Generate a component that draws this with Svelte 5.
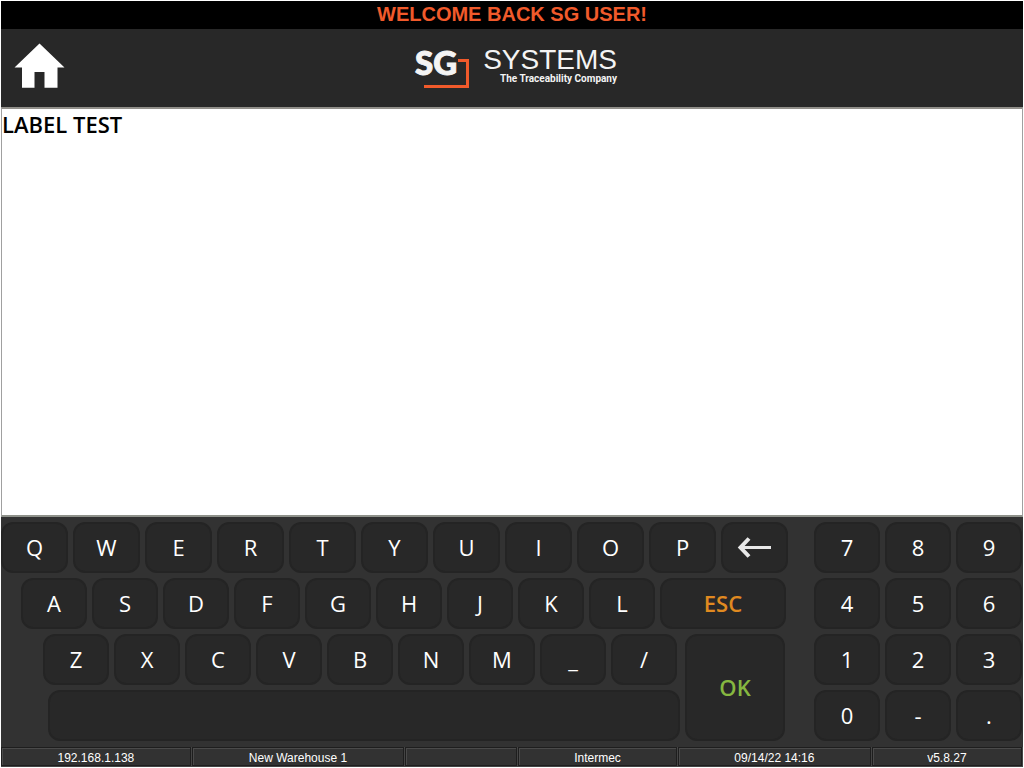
<script>
  let text = $state('LABEL TEST');

  const top = [...'QWERTYUIOP'];
  const home = [...'ASDFGHJKL'];
  const bottom = [...'ZXCVBNM_/'];
  const numbers = [...'7894561230-.'];
  const status = [
    { text: '192.168.1.138', share: 190 },
    { text: 'New Warehouse 1', share: 213 },
    { text: '', share: 111 },
    { text: 'Intermec', share: 159 },
    { text: '09/14/22 14:16', share: 193 },
    { text: 'v5.8.27', share: 150 }
  ];

  const type = (c) => (text += c);
  const erase = () => (text = text.slice(0, -1));
  const clear = () => (text = '');
</script>

{#snippet key(c)}
  <button class="key" onclick={() => type(c)}>{c}</button>
{/snippet}

<div class="screen">
  <div class="banner">WELCOME BACK SG USER!</div>

  <header>
    <button class="home" aria-label="Home">
      <svg width="52" height="50" viewBox="0 0 52 50">
        <path d="M26.500 0.500 51.500 24.500H44.500V44.700H31.500V29H21.500V44.700H9V24.500H1.500Z" fill="#fff" />
      </svg>
    </button>
    <svg class="logo" width="214" height="54" viewBox="0 0 214 54">
      <text class="sg" x="10" y="34">SG</text>
      <path d="M53 19.500H62.500V45.500H19" fill="none" stroke="#f15a2b" stroke-width="3" />
      <text class="systems" x="212" y="28" text-anchor="end">SYSTEMS</text>
      <text class="tag" x="212" y="41" text-anchor="end">The Traceability Company</text>
    </svg>
  </header>

  <textarea aria-label="Label text" spellcheck="false" bind:value={text}></textarea>

  <main>
    <div class="letters">
      <div class="row first">
        {#each top as c}{@render key(c)}{/each}
        <button class="key" aria-label="Backspace" onclick={erase}>
          <svg width="36" height="22" viewBox="0 0 36 22">
            <path d="M34 11.500H4" fill="none" stroke="#e8e8e8" stroke-width="3" />
            <path d="M12 2.500 3.500 11.500 12 20.500" fill="none" stroke="#e8e8e8" stroke-width="4" />
          </svg>
        </button>
      </div>
      <div class="row second">
        {#each home as c}{@render key(c)}{/each}
        <button class="key esc" onclick={clear}>ESC</button>
      </div>
      <div class="lower">
        <div class="stack">
          <div class="row third">
            {#each bottom as c}{@render key(c)}{/each}
          </div>
          <button class="key space" aria-label="Space" onclick={() => type(' ')}></button>
        </div>
        <button class="key ok">OK</button>
      </div>
    </div>
    <div class="numbers">
      {#each numbers as c}{@render key(c)}{/each}
    </div>
  </main>

  <footer>
    {#each status as cell}
      <div class="cell" style="flex-grow: {cell.share}">{cell.text}</div>
    {/each}
  </footer>
</div>

<style>
  :global(body) {
    margin: 0;
  }
  .screen {
    box-sizing: border-box;
    min-height: 100vh;
    display: flex;
    flex-direction: column;
    border: 1px solid #fff;
    background: #323232;
    font-family: 'Open Sans', 'Noto Sans', sans-serif;
  }
  button {
    padding: 0;
    border: 0;
    background: none;
    color: inherit;
    font: inherit;
    cursor: pointer;
  }
  .banner {
    box-sizing: border-box;
    height: 28px;
    background: #000;
    color: #f15a2b;
    text-align: center;
    font: bold 20px/26px 'Liberation Sans', Arial, sans-serif;
  }
  header {
    height: 78px;
    display: grid;
    grid-template-columns: 1fr auto 1fr;
    align-items: center;
    background: #282828;
  }
  .home {
    justify-self: start;
    margin-left: 12px;
  }
  svg {
    display: block;
  }
  .sg {
    font: 900 33px 'Lato', sans-serif;
    fill: #f4f4f4;
    stroke: #f4f4f4;
    stroke-width: 1px;
  }
  .tag {
    font: bold 10px 'Roboto', sans-serif;
    fill: #f4f4f4;
  }
  .systems {
    font: 28px 'Liberation Sans', Arial, sans-serif;
    fill: #f4f4f4;
  }
  textarea {
    flex: 1;
    min-height: 120px;
    box-sizing: border-box;
    width: 100%;
    margin: 0;
    padding: 0;
    border: 1px solid #a0a0a0;
    border-top: 2px solid #918f8a;
    border-bottom: 2px solid #8e918a;
    border-radius: 0;
    outline: 0;
    resize: none;
    background: #fff;
    color: #000;
    font: 600 22px/30px 'Open Sans', sans-serif;
  }
  main {
    display: grid;
    grid-template-columns: 787fr 208fr;
    column-gap: 26px;
    padding: 5px 1px 6px 0;
    color: #fff;
    font-size: 22px;
  }
  .letters,
  .stack {
    display: grid;
    gap: 5px;
  }
  .row {
    display: grid;
    gap: 5px;
  }
  .first {
    grid-template-columns: repeat(11, 1fr);
  }
  .second {
    grid-template-columns: repeat(9, 66fr) 126fr;
    padding: 0 2px 0 20px;
  }
  .third {
    grid-template-columns: repeat(9, 1fr);
    padding-right: 3px;
  }
  .lower {
    display: grid;
    grid-template-columns: 637fr 100fr;
    gap: 5px;
    padding: 0 3px 0 42px;
  }
  .numbers {
    display: grid;
    grid-template-columns: repeat(3, 1fr);
    gap: 5px;
  }
  .key {
    box-sizing: border-box;
    display: flex;
    align-items: center;
    justify-content: center;
    min-width: 0;
    min-height: 51px;
    padding-bottom: 2px;
    border: 2px solid #242424;
    border-radius: 12px;
    background: #282828;
  }
  .space {
    margin-left: 5px;
  }
  .esc {
    color: #e08a20;
    font-weight: 600;
  }
  .ok {
    color: #86b840;
    font-weight: 600;
  }
  footer {
    display: flex;
    gap: 1px;
    padding: 0 1px 1px 0;
    background: #444;
    color: #fff;
    font: 12px/18px 'Liberation Sans', Arial, sans-serif;
  }
  .cell {
    flex: 1 1 0;
    min-width: 0;
    box-sizing: border-box;
    height: 19px;
    padding-top: 1px;
    border: 1px solid #1e1e1e;
    background: #323232;
    box-shadow: inset 1px 1px #4a4a4a;
    text-align: center;
    white-space: nowrap;
  }
</style>
